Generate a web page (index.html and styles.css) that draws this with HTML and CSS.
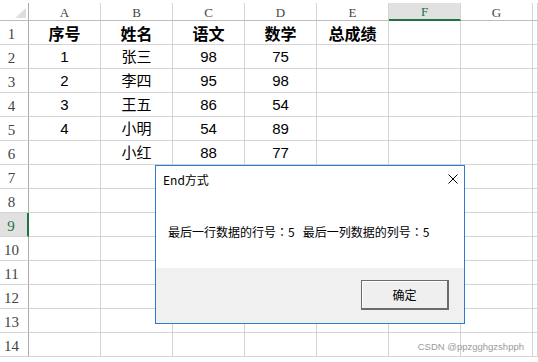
FILE: index.html
```html
<!DOCTYPE html>
<html lang="zh-CN">

<head>
  <meta charset="UTF-8" />
  <meta name="viewport" content="width=device-width, initial-scale=1.0" />
  <title>End方式</title>
  <link rel="stylesheet" href="styles.css">
</head>

<body>
  <div class="sheet" id="sheet"></div>

  <div class="dialog">
    <div class="title-bar">
      <span class="title">End方式</span>
      <svg class="close" width="10" height="10" viewBox="0 0 10 10">
        <path d="M0.5 0.5 L9.5 9.5 M9.5 0.5 L0.5 9.5" stroke="#000" stroke-width="1" fill="none" />
      </svg>
    </div>
    <div class="msg">最后一行数据的行号<span class="colon">：</span>5&nbsp;&nbsp;&nbsp;最后一列数据的列号<span class="colon">：</span>5</div>
    <div class="footer">
      <button class="btn">确定</button>
    </div>
  </div>

  <div class="mark">CSDN @ppzgghgzshpph</div>

  <script>
    let sheet = document.getElementById("sheet");
    let cols = ["A", "B", "C", "D", "E", "F", "G", ""];
    let data = [
      ["序号", "姓名", "语文", "数学", "总成绩"],
      ["1", "张三", "98", "75"],
      ["2", "李四", "95", "98"],
      ["3", "王五", "86", "54"],
      ["4", "小明", "54", "89"],
      ["", "小红", "88", "77"],
    ];
    // column headers
    sheet.innerHTML += `<div class="cell corner"></div>`;
    for (const c of cols) {
      let sel = c == "F" ? " selected" : "";
      sheet.innerHTML += `<div class="cell colhead${sel}">${c}</div>`;
    }
    // rows
    for (let r = 1; r <= 14; r++) {
      let sel = r == 9 ? " selected" : "";
      let html = `<div class="cell rowhead${sel}">${r}</div>`;
      let row = data[r - 1] || [];
      for (let i = 0; i < cols.length; i++) {
        let bold = r == 1 ? " bold" : "";
        html += `<div class="cell${bold}">${row[i] || ""}</div>`;
      }
      sheet.innerHTML += html;
    }
  </script>
</body>

</html>
```

FILE: styles.css
```css
* {
  box-sizing: border-box;
}

body {
  margin: 0;
  width: 538px;
  height: 362px;
  overflow: hidden;
  position: relative;
  background: #fff;
  font-family: "Liberation Sans", "Noto Sans CJK SC", sans-serif;
}

.sheet {
  width: 538px;
  overflow: hidden;
  display: grid;
  grid-template-columns: 29px repeat(7, 72px) 1fr;
  grid-template-rows: 18px repeat(14, 24px);
  padding-top: 3px;
}

.cell {
  border-right: 1px solid #d4d4d4;
  border-bottom: 1px solid #d4d4d4;
  display: flex;
  align-items: flex-end;
  justify-content: center;
  padding-bottom: 2px;
  font-size: 15px;
  line-height: 18px;
  color: #000;
  white-space: nowrap;
}

.bold {
  font-family: "Noto Sans CJK SC", sans-serif;
  font-weight: 700;
  font-size: 16px;
  line-height: 20px;
  padding-bottom: 1px;
}

.corner {
  position: relative;
  border-bottom-color: #bdbdbd;
  border-right-color: #ababab;
}

.corner::after {
  content: "";
  position: absolute;
  right: 2px;
  bottom: 2px;
  border-style: solid;
  border-width: 0 0 10px 11px;
  border-color: transparent transparent #dedede transparent;
}

.colhead {
  font-family: "Liberation Serif", serif;
  font-size: 13px;
  line-height: 15px;
  color: #444;
  align-items: center;
  padding-bottom: 0;
  padding-top: 1px;
  border-bottom-color: #bdbdbd;
}

.rowhead {
  font-family: "Liberation Serif", serif;
  font-size: 15px;
  color: #444;
  padding-right: 5px;
  padding-bottom: 1px;
  border-right-color: #ababab;
}

.colhead.selected {
  background: #e1e1e1;
  color: #217346;
  border-bottom: 2px solid #217346;
}

.rowhead.selected {
  background: #e1e1e1;
  color: #217346;
  border-right: 2px solid #217346;
}

.dialog {
  position: absolute;
  left: 155px;
  top: 165px;
  width: 310px;
  height: 159px;
  border: 1px solid #2b7bd4;
  background: #fff;
  display: flex;
  flex-direction: column;
  font-family: "Noto Sans CJK SC", sans-serif;
  font-size: 12px;
  color: #000;
}

.title-bar {
  height: 26px;
  display: flex;
  align-items: center;
  justify-content: space-between;
  padding: 0 6px 0 7px;
}

.msg {
  flex: 1;
  display: flex;
  align-items: center;
  padding: 3px 0 0 12px;
  white-space: pre;
}

.colon {
  font-family: "Noto Sans CJK JP", sans-serif;
}

.footer {
  height: 55px;
  background: #f0f0f0;
  display: flex;
  justify-content: flex-end;
  align-items: flex-start;
  padding: 12px 15px 0 0;
}

.btn {
  width: 88px;
  height: 30px;
  border: 1px solid #6b6b6b;
  border-right-width: 2px;
  border-bottom-width: 2px;
  box-shadow: inset 1px 1px 0 #fff;
  background: #efefef;
  font-family: "Noto Sans CJK SC", sans-serif;
  font-size: 12px;
  color: #000;
  padding: 0;
}

.mark {
  position: absolute;
  right: 14px;
  top: 341px;
  font-size: 9.5px;
  color: #9a9a9a;
}
```
